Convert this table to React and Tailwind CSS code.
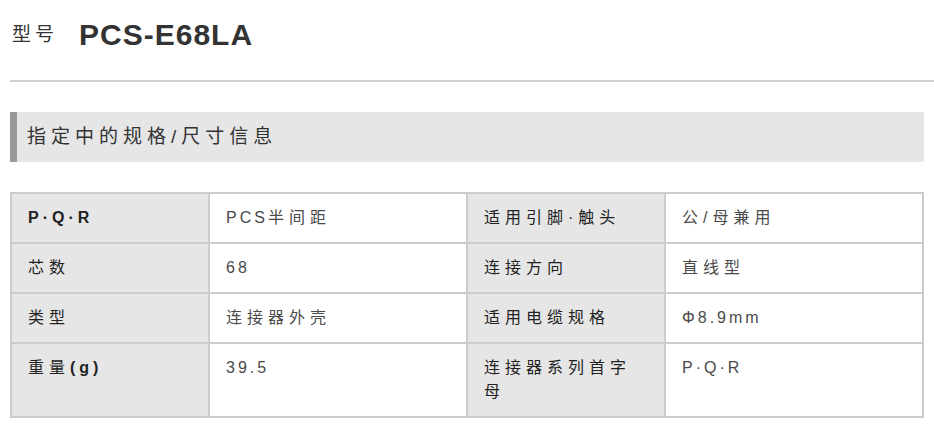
const FONT = {
  fontFamily: '"Liberation Sans", Arial, "Noto Sans CJK SC", sans-serif',
};

const rows = [
  [
    { label: "P·Q·R", value: "PCS半间距" },
    { label: "适用引脚·触头", value: "公/母兼用" },
  ],
  [
    { label: "芯数", value: "68" },
    { label: "连接方向", value: "直线型" },
  ],
  [
    { label: "类型", value: "连接器外壳" },
    { label: "适用电缆规格", value: "Φ8.9mm" },
  ],
  [
    { label: "重量(g)", value: "39.5" },
    { label: "连接器系列首字母", value: "P·Q·R" },
  ],
];

// latin runs get tighter spacing than the CJK glyphs around them
const Mixed = ({ text, latinClass }) =>
  text.split(/([A-Za-z0-9Φ.()·]+)/).map((part, i) =>
    /[A-Za-z0-9Φ]/.test(part) ? (
      <span key={i} className={latinClass}>
        {part}
      </span>
    ) : (
      <span key={i}>{part}</span>
    )
  );

const Label = ({ children }) => (
  <div className="bg-[#e6e6e6] pl-[16px] pr-[20px] py-[12px] text-[16px] leading-[24px] tracking-[5px] text-[#222]">
    <Mixed text={children} latinClass="tracking-[4px] font-bold" />
  </div>
);

const Value = ({ children }) => (
  <div className="bg-white px-[16px] py-[12px] text-[16px] leading-[24px] tracking-[5px] text-[#4a4a4a]">
    <Mixed text={children} latinClass="tracking-[3px]" />
  </div>
);

export default function App() {
  return (
    <div className="w-[934px] h-[428px] bg-white overflow-hidden" style={FONT}>
      {/* model title */}
      <div className="flex items-center pl-[12px] pt-[17px] leading-[36px]">
        <span className="text-[19px] tracking-[4px] text-[#333]">型号</span>
        <span className="ml-[21px] text-[30px] font-bold tracking-[1px] text-[#333]">
          PCS-E68LA
        </span>
      </div>

      <div className="ml-[10px] mt-[27px] h-[2px] bg-[#d0d0d0]" />

      {/* section header */}
      <div className="mx-[10px] mt-[30px] h-[50px] flex items-center bg-[#e6e6e6] border-l-[7px] border-[#999]">
        <span className="pl-[10px] text-[19px] tracking-[5px] text-[#333]">
          指定中的规格/尺寸信息
        </span>
      </div>

      {/* spec table */}
      <div className="mx-[10px] mt-[30px] grid grid-cols-[196px_256px_196px_256px] gap-[2px] p-[2px] bg-[#cccccc]">
        {rows.map((row, i) =>
          row.map((cell, j) => [
            <Label key={`l${i}${j}`}>{cell.label}</Label>,
            <Value key={`v${i}${j}`}>{cell.value}</Value>,
          ])
        )}
      </div>
    </div>
  );
}
